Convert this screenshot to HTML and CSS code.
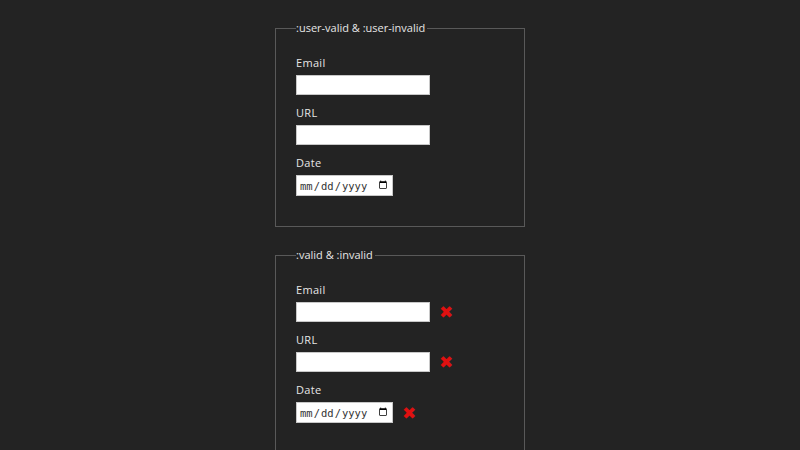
FILE: index.html
```html
<!DOCTYPE html>
<html lang="en">
<head>
<meta charset="utf-8">
<title>Validation</title>
<link rel="stylesheet" href="styles.css">
</head>
<body>
<form class="form">
  <fieldset class="group">
    <legend class="legend">:user-valid &amp; :user-invalid</legend>
    <label class="label" for="e1">Email</label>
    <div class="row"><input class="field" id="e1" type="email"></div>
    <label class="label" for="u1">URL</label>
    <div class="row"><input class="field" id="u1" type="url"></div>
    <label class="label" for="d1">Date</label>
    <div class="row"><input class="field date" id="d1" type="date"></div>
  </fieldset>
  <fieldset class="group">
    <legend class="legend">:valid &amp; :invalid</legend>
    <label class="label" for="e2">Email</label>
    <div class="row"><input class="field" id="e2" type="email"><span class="mark">✖</span></div>
    <label class="label" for="u2">URL</label>
    <div class="row"><input class="field" id="u2" type="url"><span class="mark">✖</span></div>
    <label class="label" for="d2">Date</label>
    <div class="row"><input class="field date" id="d2" type="date"><span class="mark">✖</span></div>
  </fieldset>
</form>
</body>
</html>
```
FILE: styles.css
```css
html, body {
  margin: 0;
  background: #232323;
  color: #e6e6e6;
  font-family: "Open Sans", "Noto Sans", sans-serif;
  font-size: 11px;
}
body {
  padding-top: 20px;
}
.form {
  display: flex;
  flex-direction: column;
  align-items: center;
  gap: 20px;
}
.group {
  box-sizing: border-box;
  width: 250px;
  margin: 0;
  border: 1px solid #595959;
  padding: 19px 20px 30px 20px;
}
.legend {
  padding: 0 2px 0 0;
  line-height: 16px;
}
.label {
  display: block;
  line-height: 15px;
  margin-top: 10px;
  margin-bottom: 5px;
  letter-spacing: 0.3px;
}
.label:first-of-type {
  margin-top: 0;
}
.row {
  display: flex;
  align-items: center;
  gap: 9px;
}
.field {
  box-sizing: border-box;
  width: 134px;
  height: 20px;
  margin: 0;
  border: 1px solid #c8c8c8;
  background: #fff;
  padding: 0 2px;
}
.date {
  width: 97px;
  height: 21px;
  font-family: "DejaVu Sans Mono", monospace;
  font-size: 10.5px;
  color: #333;
}
.mark {
  color: #e01010;
  font-size: 17px;
  line-height: 16px;
}
```
